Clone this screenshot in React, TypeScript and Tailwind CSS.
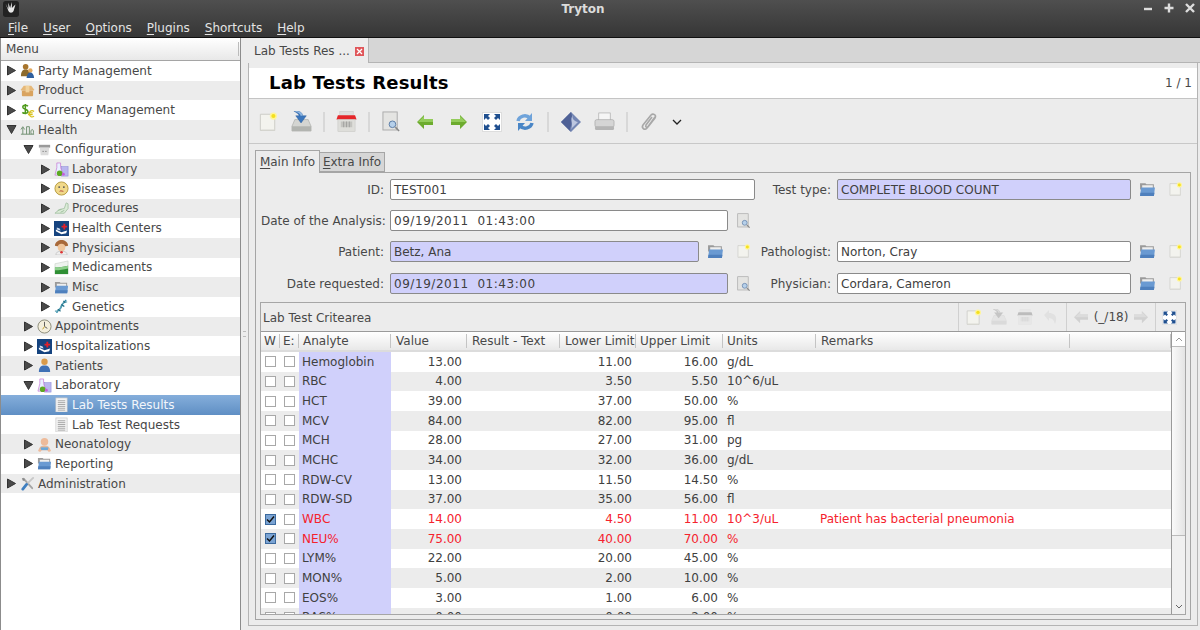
import React from "react";

const tree = [
  { label: "Party Management", level: 0, arrow: "right", icon: "party" },
  { label: "Product", level: 0, arrow: "right", icon: "product" },
  { label: "Currency Management", level: 0, arrow: "right", icon: "currency" },
  { label: "Health", level: 0, arrow: "down", icon: "health" },
  { label: "Configuration", level: 1, arrow: "down", icon: "config" },
  { label: "Laboratory", level: 2, arrow: "right", icon: "lab" },
  { label: "Diseases", level: 2, arrow: "right", icon: "smiley" },
  { label: "Procedures", level: 2, arrow: "right", icon: "procedures" },
  { label: "Health Centers", level: 2, arrow: "right", icon: "hospital" },
  { label: "Physicians", level: 2, arrow: "right", icon: "doctor" },
  { label: "Medicaments", level: 2, arrow: "right", icon: "medicament" },
  { label: "Misc", level: 2, arrow: "right", icon: "folder" },
  { label: "Genetics", level: 2, arrow: "right", icon: "dna" },
  { label: "Appointments", level: 1, arrow: "right", icon: "clock" },
  { label: "Hospitalizations", level: 1, arrow: "right", icon: "hospital" },
  { label: "Patients", level: 1, arrow: "right", icon: "patient" },
  { label: "Laboratory", level: 1, arrow: "down", icon: "lab" },
  { label: "Lab Tests Results", level: 2, arrow: "", icon: "doc", selected: true },
  { label: "Lab Test Requests", level: 2, arrow: "", icon: "doc" },
  { label: "Neonatology", level: 1, arrow: "right", icon: "baby" },
  { label: "Reporting", level: 1, arrow: "right", icon: "folder" },
  { label: "Administration", level: 0, arrow: "right", icon: "tools" },
];

const rows = [
  ["Hemoglobin", "13.00", "11.00", "16.00", "g/dL"],
  ["RBC", "4.00", "3.50", "5.50", "10^6/uL"],
  ["HCT", "39.00", "37.00", "50.00", "%"],
  ["MCV", "84.00", "82.00", "95.00", "fl"],
  ["MCH", "28.00", "27.00", "31.00", "pg"],
  ["MCHC", "34.00", "32.00", "36.00", "g/dL"],
  ["RDW-CV", "13.00", "11.50", "14.50", "%"],
  ["RDW-SD", "37.00", "35.00", "56.00", "fl"],
  ["WBC", "14.00", "4.50", "11.00", "10^3/uL", "Patient has bacterial pneumonia"],
  ["NEU%", "75.00", "40.00", "70.00", "%"],
  ["LYM%", "22.00", "20.00", "45.00", "%"],
  ["MON%", "5.00", "2.00", "10.00", "%"],
  ["EOS%", "3.00", "1.00", "6.00", "%"],
  ["BAS%", "0.00", "0.00", "2.00", "%"],
];

const indent = ["pl-[5px]", "pl-[22px]", "pl-[39px]"];

function Icon({ name, size = 16, faded = false }: { name: string; size?: number; faded?: boolean }) {
  const cls = faded ? "shrink-0 opacity-30 grayscale" : "shrink-0";
  const s = { width: size, height: size };
  switch (name) {
    case "party":
      return (
        <svg viewBox="0 0 16 16" style={s} className={cls}>
          <circle cx="6" cy="4" r="3" fill="#a8752c" />
          <path d="M1 14c0-5 2-7 5-7s5 2 5 7z" fill="#8c6a2c" />
          <circle cx="11" cy="8" r="2.4" fill="#e3a95e" />
          <path d="M7 16c0-4 2-6 4-6s4 2 4 6z" fill="#2f5f9e" />
        </svg>
      );
    case "product":
      return (
        <svg viewBox="0 0 16 16" style={s} className={cls}>
          <path d="M1 7l3-4h8l3 4v1H1z" fill="#e6b878" />
          <rect x="2" y="8" width="12" height="6" rx="1" fill="#d9a35f" />
          <rect x="6" y="3" width="4" height="7" fill="#f1d29c" />
        </svg>
      );
    case "currency":
      return (
        <svg viewBox="0 0 16 16" style={s} className={cls}>
          <path d="M8.500 3.500C7 2 3 2 3 4.500S8.500 6.500 8.500 9 4 11.500 2.500 10M5.700 1v11" fill="none" stroke="#4f9a1c" strokeWidth="1.600" />
          <path d="M15 9c-2-1.500-5-1-5 2.500s3 4 5 2.500M8.500 10.500h5M8.500 12.500h5" fill="none" stroke="#d8c11e" strokeWidth="1.300" />
        </svg>
      );
    case "health":
      return (
        <svg viewBox="0 0 16 16" style={s} className={cls} fill="none" stroke="#6f8f70" strokeWidth="1">
          <path d="M1 13h14M3 13V6M1 8l2-3 2 3M7 13V5h3v8M12 13c-1-3 0-5 1-5s2 2 1 5" />
        </svg>
      );
    case "config":
      return (
        <svg viewBox="0 0 16 16" style={s} className={cls}>
          <rect x="2" y="3" width="12" height="3" fill="#9a9a9a" />
          <path d="M3 6h10l-1 8H4z" fill="#dcdcdc" />
          <path d="M6 10h1M9 10h1" stroke="#555" />
        </svg>
      );
    case "lab":
      return (
        <svg viewBox="0 0 16 16" style={s} className={cls}>
          <rect x="8" y="5" width="7" height="10" fill="#b9b6ee" stroke="#8f8cd8" strokeWidth=".6" />
          <path d="M3 1h4v5l3 8H1l2-8z" fill="#e8f0ff" stroke="#c56ed1" strokeWidth=".7" />
          <circle cx="6" cy="12" r="3" fill="#5ca821" />
          <circle cx="10" cy="13" r="1.5" fill="#c55ed8" />
        </svg>
      );
    case "smiley":
      return (
        <svg viewBox="0 0 16 16" style={s} className={cls}>
          <circle cx="8" cy="8" r="7" fill="#f1d98a" stroke="#b59a3f" />
          <circle cx="5.500" cy="6.500" r="1" fill="#555" />
          <circle cx="10.500" cy="6.500" r="1" fill="#555" />
          <path d="M6 11c1-1 3 0 4 0" stroke="#a33" fill="none" />
        </svg>
      );
    case "procedures":
      return (
        <svg viewBox="0 0 16 16" style={s} className={cls} fill="none">
          <path d="M1 13L6 9l5-1 2-6 2 1v5l-4 5H3z" fill="#dcebd8" stroke="#a9c4a8" />
          <path d="M4 10l4-1M7 12l4-2" stroke="#9dbd9c" />
        </svg>
      );
    case "hospital":
      return (
        <svg viewBox="0 0 16 16" style={s} className={cls}>
          <rect width="16" height="16" fill="#15437f" />
          <path d="M2 9l6 3 6-2-1 3-5 1-6-3z" fill="#fff" />
          <path d="M3 7l3 1 1 2-4-1z" fill="#cfdcef" />
          <path d="M10 3h2v2h2v2h-2v2h-2V7H8V5h2z" fill="#e0202a" />
        </svg>
      );
    case "doctor":
      return (
        <svg viewBox="0 0 16 16" style={s} className={cls}>
          <path d="M1 6c0-4 4-6 7-6s7 2 7 6c-2 1-12 1-14 0z" fill="#a8693a" />
          <circle cx="8" cy="8" r="4" fill="#f0c69c" />
          <path d="M2 16c0-3 2-4 6-4s6 1 6 4z" fill="#eee" stroke="#aaa" strokeWidth=".5" />
          <circle cx="8" cy="13" r="1.400" fill="#d33" />
        </svg>
      );
    case "medicament":
      return (
        <svg viewBox="0 0 16 16" style={s} className={cls}>
          <path d="M1 4l14-3v14H1z" fill="#eef3ee" stroke="#b8c4b8" strokeWidth=".5" />
          <path d="M1 8c5 0 9-1 14-2v9H1z" fill="#2f8f34" />
          <path d="M1 8c5 0 9-1 14-2v3c-5 1-9 2-14 2z" fill="#8ccf8a" />
        </svg>
      );
    case "folder":
      return (
        <svg viewBox="0 0 16 16" style={s} className={cls}>
          <path d="M1 2h5l1 1h7v5H1z" fill="#9a9a9a" />
          <path d="M3 4h10v4H3z" fill="#eee" />
          <path d="M1 14l1-8h13l-1 8z" fill="#6a9ad2" />
          <path d="M1 14l.4-3h13.200l-.6 3z" fill="#4f80bd" />
        </svg>
      );
    case "dna":
      return (
        <svg viewBox="0 0 16 16" style={s} className={cls} fill="none" strokeWidth="1.400">
          <path d="M3 15c0-4 4-3 5-7s2-3 5-7" stroke="#2b8aa8" />
          <path d="M1 13c3 0 5 0 6-4s3-6 7-6" stroke="#5ea3b5" />
          <path d="M4 11l3 2M8 6l3 2M10 2l2 2" stroke="#1f6f88" />
        </svg>
      );
    case "clock":
      return (
        <svg viewBox="0 0 16 16" style={s} className={cls} fill="none">
          <circle cx="8" cy="8" r="7" fill="#f3eedc" stroke="#8a8a78" />
          <path d="M8 3v5l3 2" stroke="#555" />
          <path d="M8 8l-2 3" stroke="#c9a22c" />
        </svg>
      );
    case "patient":
      return (
        <svg viewBox="0 0 16 16" style={s} className={cls}>
          <circle cx="8" cy="4" r="3.400" fill="#d99a4a" />
          <path d="M2 15c0-5 2-7 6-7s6 2 6 7z" fill="#3f70b5" />
        </svg>
      );
    case "doc":
      return (
        <svg viewBox="0 0 16 16" style={s} className={cls}>
          <rect x="2" y="1" width="12" height="15" fill="#f4f4f4" stroke="#c8c8c8" strokeWidth=".7" />
          <path d="M4 4h8M4 6h8M4 8h8M4 10h8M4 12h8M4 14h8" stroke="#a5a5a5" />
        </svg>
      );
    case "baby":
      return (
        <svg viewBox="0 0 16 16" style={s} className={cls}>
          <circle cx="8" cy="5" r="4" fill="#eebb9a" />
          <path d="M2 14c0-3 2-5 6-5s6 2 6 5z" fill="#e6b89a" />
          <path d="M4 11h8v3H4z" fill="#6ea9d8" />
          <circle cx="3" cy="14" r="1.600" fill="#eebb9a" />
          <circle cx="13" cy="14" r="1.600" fill="#eebb9a" />
        </svg>
      );
    case "tools":
      return (
        <svg viewBox="0 0 16 16" style={s} className={cls} fill="none" strokeLinecap="round">
          <path d="M4 3l9 10" stroke="#a5a5a5" strokeWidth="2" />
          <path d="M2 2l3 1 0 2-2 0z" fill="#888" />
          <path d="M14 2L7 9" stroke="#c8c8c8" strokeWidth="2" />
          <path d="M7 9l-4 5" stroke="#3f7fc0" strokeWidth="3" />
        </svg>
      );
    case "new":
      return (
        <svg viewBox="0 0 20 22" style={{ width: size, height: (size * 22) / 20 }} className={cls}>
          <path d="M1.500 2.500h16v18h-16z" fill="#f3f3ee" stroke="#c9c9c4" />
          <path d="M2.500 19.500h15v1h-15z" fill="#d8d8d2" />
          <circle cx="16" cy="4.500" r="4" fill="#fff59a" />
          <circle cx="16" cy="4.500" r="2.300" fill="#f4e01e" />
        </svg>
      );
    case "save":
      return (
        <svg viewBox="0 0 22 22" style={{ width: size, height: size }} className={cls}>
          <path d="M4 9h14l3 7v5H1v-5z" fill="#d4d5d2" stroke="#a2a4a0" strokeWidth=".6" />
          <rect x="1" y="16" width="20" height="5" fill="#b2b4b0" />
          <path d="M3 0c7 0 9 2 9 5h4l-5.500 7.500L5 5h3.500C8.500 3 6 2 3 0z" fill="#3b76bc" stroke="#2a5a9a" strokeWidth=".5" />
          <path d="M3 0c7 0 9 2 9 5h-2C10 3 7 1 3 0z" fill="#8fb6e0" />
        </svg>
      );
    case "delete":
      return (
        <svg viewBox="0 0 22 22" style={{ width: size, height: size }} className={cls}>
          <rect x="4" y="0.500" width="14" height="6" fill="#dedede" stroke="#c4c4c4" strokeWidth=".5" />
          <path d="M2 4.500h18l1.500 4.500H.5z" fill="#e5262a" />
          <rect x="2" y="9" width="18" height="12.500" fill="#dededa" stroke="#c2c2be" strokeWidth=".5" />
          <rect x="5" y="11" width="12" height="6" fill="#c4c4c0" />
          <path d="M8 11v6M11 11v6M14 11v6" stroke="#a2a29e" />
        </svg>
      );
    case "search":
      return (
        <svg viewBox="0 0 20 22" style={{ width: size, height: (size * 22) / 20 }} className={cls} fill="none">
          <rect x="1" y="1" width="15" height="19" fill="#e4e4e2" stroke="#aaa" />
          <circle cx="11" cy="14" r="3.500" fill="#b6d0ea" stroke="#5a7ba5" />
          <path d="M14 17l4 4" stroke="#888" strokeWidth="1.600" />
        </svg>
      );
    case "prev":
      return (
        <svg viewBox="0 0 16 14" style={{ width: size, height: (size * 14) / 16 }} className={cls}>
          <path d="M0 7l7-7v4h9v6H7v4z" fill="#6dab2e" />
          <path d="M1 7l6-6v3h9v3z" fill="#93cc5a" />
        </svg>
      );
    case "next":
      return (
        <svg viewBox="0 0 16 14" style={{ width: size, height: (size * 14) / 16 }} className={cls}>
          <path d="M16 7L9 0v4H0v6h9v4z" fill="#6dab2e" />
          <path d="M15 7L9 1v3H0v3z" fill="#93cc5a" />
        </svg>
      );
    case "full":
      return (
        <svg viewBox="0 0 20 20" style={{ width: size, height: size }} className={cls}>
          <rect x=".5" y=".5" width="19" height="19" fill="#fff" stroke="#ddd" />
          <path d="M2 2h6L6 4l2 2-2 2-2-2-2 2zM18 2v6l-2-2-2 2-2-2 2-2-2-2zM2 18v-6l2 2 2-2 2 2-2 2 2 2zM18 18h-6l2-2-2-2 2-2 2 2 2-2z" fill="#1f4f8f" />
        </svg>
      );
    case "refresh":
      return (
        <svg viewBox="0 0 20 20" style={{ width: size, height: size }} className={cls} fill="none">
          <path d="M3 9c1-5 8-7 12-3" stroke="#6fa3da" strokeWidth="3.400" />
          <path d="M17 1v8h-7z" fill="#6fa3da" />
          <path d="M17 11c-1 5-8 7-12 3" stroke="#4a86c6" strokeWidth="3.400" />
          <path d="M3 19v-8h7z" fill="#4a86c6" />
        </svg>
      );
    case "action":
      return (
        <svg viewBox="0 0 20 20" style={{ width: size, height: size }} className={cls}>
          <path d="M10 0l10 10-10 10L0 10z" fill="#7486b4" />
          <path d="M10 0L0 10l10 10c-3-5 4-7 0-20z" fill="#4f6196" />
          <path d="M12 3c-2 3 2 7 5 7l-7 7c3-5-2-9 2-14z" fill="#bcc6e0" />
        </svg>
      );
    case "print":
      return (
        <svg viewBox="0 0 22 20" style={{ width: size, height: (size * 20) / 22 }} className={cls}>
          <rect x="5" y="1" width="12" height="8" fill="#f5f5f5" stroke="#aaa" strokeWidth=".7" />
          <rect x="1" y="8" width="20" height="8" rx="2" fill="#d5d5d5" stroke="#a5a5a5" strokeWidth=".7" />
          <rect x="1" y="15" width="20" height="4" rx="1.500" fill="#b5b5b5" />
        </svg>
      );
    case "clip":
      return (
        <svg viewBox="0 0 20 20" style={{ width: size, height: size }} className={cls} fill="none">
          <path d="M15 5L7 16c-2 3-6 0-4-3l8-10c2-2 6 0 4 3L8 15c-1 1-3 0-2-2l6-8" stroke="#a8a8a8" strokeWidth="1.600" />
        </svg>
      );
    case "undo":
      return (
        <svg viewBox="0 0 16 16" style={{ width: size, height: size }} className={cls}>
          <path d="M1 6l5-5v3c6 0 9 4 6 11-1-4-3-6-6-6v3z" fill="#c9c9c9" />
        </svg>
      );
    default:
      return null;
  }
}

function Arrow({ dir }: { dir: string }) {
  if (!dir) return <span className="w-[11px] shrink-0" />;
  return (
    <svg viewBox="0 0 11 11" className="w-[11px] h-[11px] shrink-0">
      {dir === "right" ? (
        <path d="M1.500 1l8 4.500-8 4.500z" fill="#4a4a4a" stroke="#333" strokeWidth="1" />
      ) : (
        <path d="M1 1.500l9 0-4.500 8z" fill="#4a4a4a" stroke="#333" strokeWidth="1" />
      )}
    </svg>
  );
}

function Tree() {
  return (
    <div className="flex-1 bg-white">
      {tree.map((t, i) => (
        <div
          key={i}
          className={
            "h-[19.67px] flex items-center gap-[3px] " +
            indent[t.level] +
            " " +
            (t.selected
              ? "bg-gradient-to-b from-[#85aedb] to-[#5f8fc4] text-[#f2f6fb]"
              : i % 2 === 1
              ? "bg-[#ececec] text-[#484848]"
              : "bg-white text-[#484848]")
          }
        >
          <Arrow dir={t.arrow} />
          <span className="w-[15px] flex justify-center">
            <Icon name={t.icon} size={15} />
          </span>
          <span className="whitespace-nowrap">{t.label}</span>
        </div>
      ))}
    </div>
  );
}

function Mn({ c, rest }: { c: string; rest: string }) {
  return (
    <span>
      <span className="underline underline-offset-2">{c}</span>
      {rest}
    </span>
  );
}

function Sep() {
  return <div className="w-[2px] h-[20px] bg-[#d8d8d8] mx-[5px]" />;
}

function ToolBtn({ name, size = 20 }: { name: string; size?: number }) {
  return (
    <div className="w-[33.4px] flex justify-center items-center">
      <Icon name={name} size={size} />
    </div>
  );
}

function Field({ value, w, required, mono }: { value: string; w: string; required?: boolean; mono?: boolean }) {
  return (
    <div
      className={
        "h-[21px] border border-[#8a8a8a] rounded-[2px] px-[3px] flex items-center text-[#404040] whitespace-pre " +
        w +
        " " +
        (required ? "bg-[#d0d0fb] " : "bg-white ") +
        (mono ? "tracking-[0.55px]" : "")
      }
    >
      {value}
    </div>
  );
}

function Label({ children, w }: { children: string; w: string }) {
  return <div className={"text-right whitespace-nowrap text-[#484848] pr-[6px] " + w}>{children}:</div>;
}

function PairIcons() {
  return (
    <div className="flex items-center pl-[8px] gap-[13px]">
      <Icon name="folder" size={17} />
      <Icon name="new" size={13} />
    </div>
  );
}

function Form() {
  return (
    <div className="flex flex-col gap-[10px] pl-[5px] pt-[6px]">
      <div className="flex items-center h-[21px]">
        <Label w="w-[129px]">ID</Label>
        <Field value="TEST001" w="w-[365px]" />
        <Label w="w-[82px]">Test type</Label>
        <Field value="COMPLETE BLOOD COUNT" w="w-[294px]" required />
        <PairIcons />
      </div>
      <div className="flex items-center h-[21px]">
        <Label w="w-[129px]">Date of the Analysis</Label>
        <Field value="09/19/2011  01:43:00" w="w-[338px]" mono />
        <div className="pl-[9px]">
          <Icon name="search" size={14} />
        </div>
      </div>
      <div className="flex items-center h-[21px]">
        <Label w="w-[129px]">Patient</Label>
        <Field value="Betz, Ana" w="w-[309px]" required />
        <PairIcons />
        <Label w="w-[87px]">Pathologist</Label>
        <Field value="Norton, Cray" w="w-[294px]" />
        <PairIcons />
      </div>
      <div className="flex items-center h-[21px] mt-[1px]">
        <Label w="w-[129px]">Date requested</Label>
        <Field value="09/19/2011  01:43:00" w="w-[338px]" required mono />
        <div className="pl-[9px] w-[27px]">
          <Icon name="search" size={14} />
        </div>
        <Label w="w-[82px]">Physician</Label>
        <Field value="Cordara, Cameron" w="w-[294px]" />
        <PairIcons />
      </div>
    </div>
  );
}

const headers = [
  ["W", "w-[19px] pl-[3px]"],
  ["E:", "w-[19px] pl-[3px]"],
  ["Analyte", "w-[92px] pl-[4px]"],
  ["Value", "w-[76px] pl-[5px]"],
  ["Result - Text", "w-[93px] pl-[5px]"],
  ["Lower Limit", "w-[76px] pl-[5px]"],
  ["Upper Limit", "w-[87px] pl-[4px]"],
  ["Units", "w-[93px] pl-[4px]"],
  ["Remarks", "w-[254px] pl-[5px]"],
  ["", "flex-1"],
];

function Check({ on }: { on?: boolean }) {
  if (on) {
    return (
      <svg viewBox="0 0 11 11" className="w-[11px] h-[11px]">
        <rect x=".5" y=".5" width="10" height="10" fill="#7ba4d4" stroke="#3c6a9e" />
        <path d="M2 5.500l2.500 2.500L9 2.500" fill="none" stroke="#111" strokeWidth="1.500" />
      </svg>
    );
  }
  return <div className="w-[11px] h-[11px] border border-[#a8a8a8] bg-white" />;
}

function LabTable() {
  return (
    <div className="flex flex-1 min-h-0 overflow-hidden border-t border-[#9a9a9a]">
      <div className="flex-1 min-w-0 flex flex-col overflow-hidden">
        <div className="h-[20px] shrink-0 flex bg-gradient-to-b from-white to-[#e8e8e8] border-b-[2px] border-[#dcdcdc] items-center text-[#484848]">
          {headers.map(([h, c], i) => (
            <div key={i} className={"h-[14px] flex items-center whitespace-nowrap overflow-hidden border-r border-[#c4c4c4] " + c}>
              {h}
            </div>
          ))}
        </div>
        <div className="relative flex-1 min-h-0 overflow-hidden">
          {rows.map((r, i) => {
            const red = r[0] === "WBC" || r[0] === "NEU%";
            return (
              <div
                key={r[0]}
                className={
                  "h-[19.67px] flex items-center " +
                  (i % 2 === 1 ? "bg-[#ececec] " : "bg-white ") +
                  (red ? "text-[#f5222d]" : "text-[#404040]")
                }
              >
                <div className="w-[19px] flex justify-center">
                  <Check on={red} />
                </div>
                <div className="w-[19px] flex justify-center">
                  <Check />
                </div>
                <div className="w-[92px] h-full bg-[#d0d0fb] pl-[3px] flex items-center">{r[0]}</div>
                <div className="w-[71px] text-right">{r[1]}</div>
                <div className="w-[170px] text-right">{r[2]}</div>
                <div className="w-[86px] text-right">{r[3]}</div>
                <div className="w-[102px] pl-[9px]">{r[4]}</div>
                <div className="whitespace-nowrap">{r[5]}</div>
              </div>
            );
          })}
        </div>
      </div>
      <div className="w-[14px] shrink-0 border-l border-[#9a9a9a] bg-[#f0f0f0] flex flex-col items-center">
        <div className="h-[15px] shrink-0 w-full bg-white border-b border-[#bbb] flex items-center justify-center">
          <svg viewBox="0 0 8 5" className="w-[8px] h-[5px]">
            <path d="M1 4l3-3 3 3" fill="none" stroke="#999" />
          </svg>
        </div>
        <div className="h-[189px] shrink-0 w-full bg-gradient-to-r from-[#fafafa] to-[#e4e4e4] border-b border-[#bbb]" />
        <div className="flex-1" />
        <svg viewBox="0 0 8 5" className="w-[8px] h-[5px] mb-[5px]">
          <path d="M1 1l3 3 3-3" fill="none" stroke="#666" />
        </svg>
      </div>
    </div>
  );
}

function TablePanel() {
  return (
    <div className="flex-1 min-h-0 mx-[4px] mt-[8px] mb-[4px] border border-[#a6a6a6] flex flex-col">
      <div className="h-[28px] shrink-0 flex items-center justify-between pl-[2px]">
        <span className="text-[#484848] pt-[2px]">Lab Test Critearea</span>
        <div className="flex items-center h-full">
          <div className="w-[108px] flex items-center h-full border-l border-[#d0d0d0] pl-[7px] gap-[10px]">
            <Icon name="new" size={15} />
            <Icon name="save" size={16} faded />
            <Icon name="delete" size={16} faded />
            <Icon name="undo" size={16} faded />
          </div>
          <div className="w-[89px] flex items-center justify-between h-full border-l border-[#d0d0d0] px-[7px] text-[#484848]">
            <Icon name="prev" size={14} faded />
            <span>(_/18)</span>
            <Icon name="next" size={14} faded />
          </div>
          <div className="w-[30px] flex items-center h-full border-l border-[#d0d0d0] pl-[6px]">
            <Icon name="full" size={15} />
          </div>
        </div>
      </div>
      <LabTable />
    </div>
  );
}

export default function App() {
  return (
    <div className="w-[1200px] h-[630px] overflow-hidden flex flex-col bg-[#ececec] text-[12px] leading-none font-['DejaVu_Sans',sans-serif]">
      {/* window title and menus */}
      <div className="h-[38px] shrink-0 bg-gradient-to-b from-[#4f4f4f] to-[#363636] border-b border-[#111] text-[#e4e4e4]">
        <div className="relative h-[19px] flex items-center justify-center font-bold text-[#dcdcdc] pr-[34px] pb-[2px]">
          <svg viewBox="0 0 18 18" className="absolute left-[3px] top-[1px] w-[16px] h-[16px]">
            <rect width="18" height="18" rx="3" fill="#222" />
            <path d="M3 3l3 6 0-7 2 6 2-7 0 7 4-4-2 7c-1 3-5 3-6 0z" fill="#e8e8e8" />
          </svg>
          Tryton
          <div className="absolute right-[5px] top-[3px] flex items-center gap-[11px] text-[#ddd]">
            <svg viewBox="0 0 10 10" className="w-[10px] h-[10px]"><path d="M1 6h8" stroke="#ddd" strokeWidth="2.400" /></svg>
            <svg viewBox="0 0 10 10" className="w-[10px] h-[10px]"><path d="M0.500 5h9M5 0.500v9" stroke="#ddd" strokeWidth="2.400" /></svg>
            <svg viewBox="0 0 10 10" className="w-[10px] h-[10px]"><path d="M1 1l8 8M9 1l-8 8" stroke="#ddd" strokeWidth="2.400" /></svg>
          </div>
        </div>
        <div className="h-[18px] flex items-center gap-[15px] pl-[8px]">
          <Mn c="F" rest="ile" />
          <Mn c="U" rest="ser" />
          <Mn c="O" rest="ptions" />
          <Mn c="P" rest="lugins" />
          <Mn c="S" rest="hortcuts" />
          <Mn c="H" rest="elp" />
        </div>
      </div>

      <div className="flex-1 min-h-0 flex">
        {/* menu tree */}
        <div className="w-[241px] shrink-0 border-l border-r border-[#8c8c8c] bg-white flex flex-col">
          <div className="h-[23px] shrink-0 flex items-center pl-[5px] text-[#484848] border-b border-[#a5a5a5] bg-gradient-to-b from-white to-[#e8e8e8] relative">
            Menu
            <div className="absolute right-[1px] top-[4px] h-[14px] w-px bg-[#bbb]" />
          </div>
          <Tree />
        </div>

        {/* pane handle */}
        <div className="w-[7px] shrink-0 flex items-center justify-center">
          <div className="w-[3px] h-[6px] border-y border-[#bbb]" />
        </div>

        {/* right side */}
        <div className="flex-1 min-w-0 flex flex-col">
          <div className="h-[25px] shrink-0 bg-[#d6d6d6] border-b border-[#b4b4b4] flex">
            <div className="w-[121px] h-[25px] bg-[#ececec] border-r border-[#b4b4b4] flex items-center pl-[6px] gap-[5px] text-[#484848] pt-[1px]">
              <span className="whitespace-nowrap">Lab Tests Res ...</span>
              <svg viewBox="0 0 9 9" className="w-[9px] h-[9px]">
                <rect width="9" height="9" fill="#e0565a" />
                <path d="M2 2l5 5M7 2L2 7" stroke="#fff" strokeWidth="1.300" />
              </svg>
            </div>
          </div>

          <div className="flex-1 min-h-0 mr-[2px] mb-[4px] border-x border-b border-[#b4b4b4] flex flex-col">
            <div className="h-[31px] shrink-0 mt-[5px] bg-white border-b border-[#c4c4c4] flex items-center justify-between pl-[20px] pr-[5px]">
              <span className="text-[18px] font-bold text-black tracking-[0.2px]">Lab Tests Results</span>
              <span className="text-[#484848]">1 / 1</span>
            </div>

            <div className="h-[45px] shrink-0 flex items-center pl-[2px] pt-[1px] border-b border-[#c8c8c8]">
              <ToolBtn name="new" size={18} />
              <ToolBtn name="save" size={21} />
              <Sep />
              <ToolBtn name="delete" size={21} />
              <Sep />
              <ToolBtn name="search" size={19} />
              <ToolBtn name="prev" size={16} />
              <ToolBtn name="next" size={16} />
              <ToolBtn name="full" size={20} />
              <ToolBtn name="refresh" size={20} />
              <Sep />
              <ToolBtn name="action" size={20} />
              <ToolBtn name="print" size={21} />
              <Sep />
              <ToolBtn name="clip" size={20} />
              <svg viewBox="0 0 10 6" className="w-[10px] h-[6px] ml-[6px]">
                <path d="M1 1l4 4 4-4" fill="none" stroke="#222" strokeWidth="1.300" />
              </svg>
            </div>

            {/* notebook */}
            <div className="flex-1 min-h-0 flex flex-col pl-[6px] pr-[6px] pt-[5px] pb-[5px]">
              <div className="flex items-end h-[23px] shrink-0 text-[#484848]">
                <div className="h-[23px] w-[65px] bg-[#ececec] border border-b-0 border-[#a5a5a5] flex items-center justify-center relative z-10 -mb-px">
                  <Mn c="M" rest="ain Info" />
                </div>
                <div className="h-[20px] w-[65px] bg-[#d6d6d6] border border-l-0 border-[#a5a5a5] flex items-center justify-center">
                  <Mn c="E" rest="xtra Info" />
                </div>
              </div>
              <div className="flex-1 min-h-0 border border-[#a5a5a5] flex flex-col">
                <Form />
                <TablePanel />
              </div>
            </div>
          </div>
        </div>
      </div>
    </div>
  );
}
